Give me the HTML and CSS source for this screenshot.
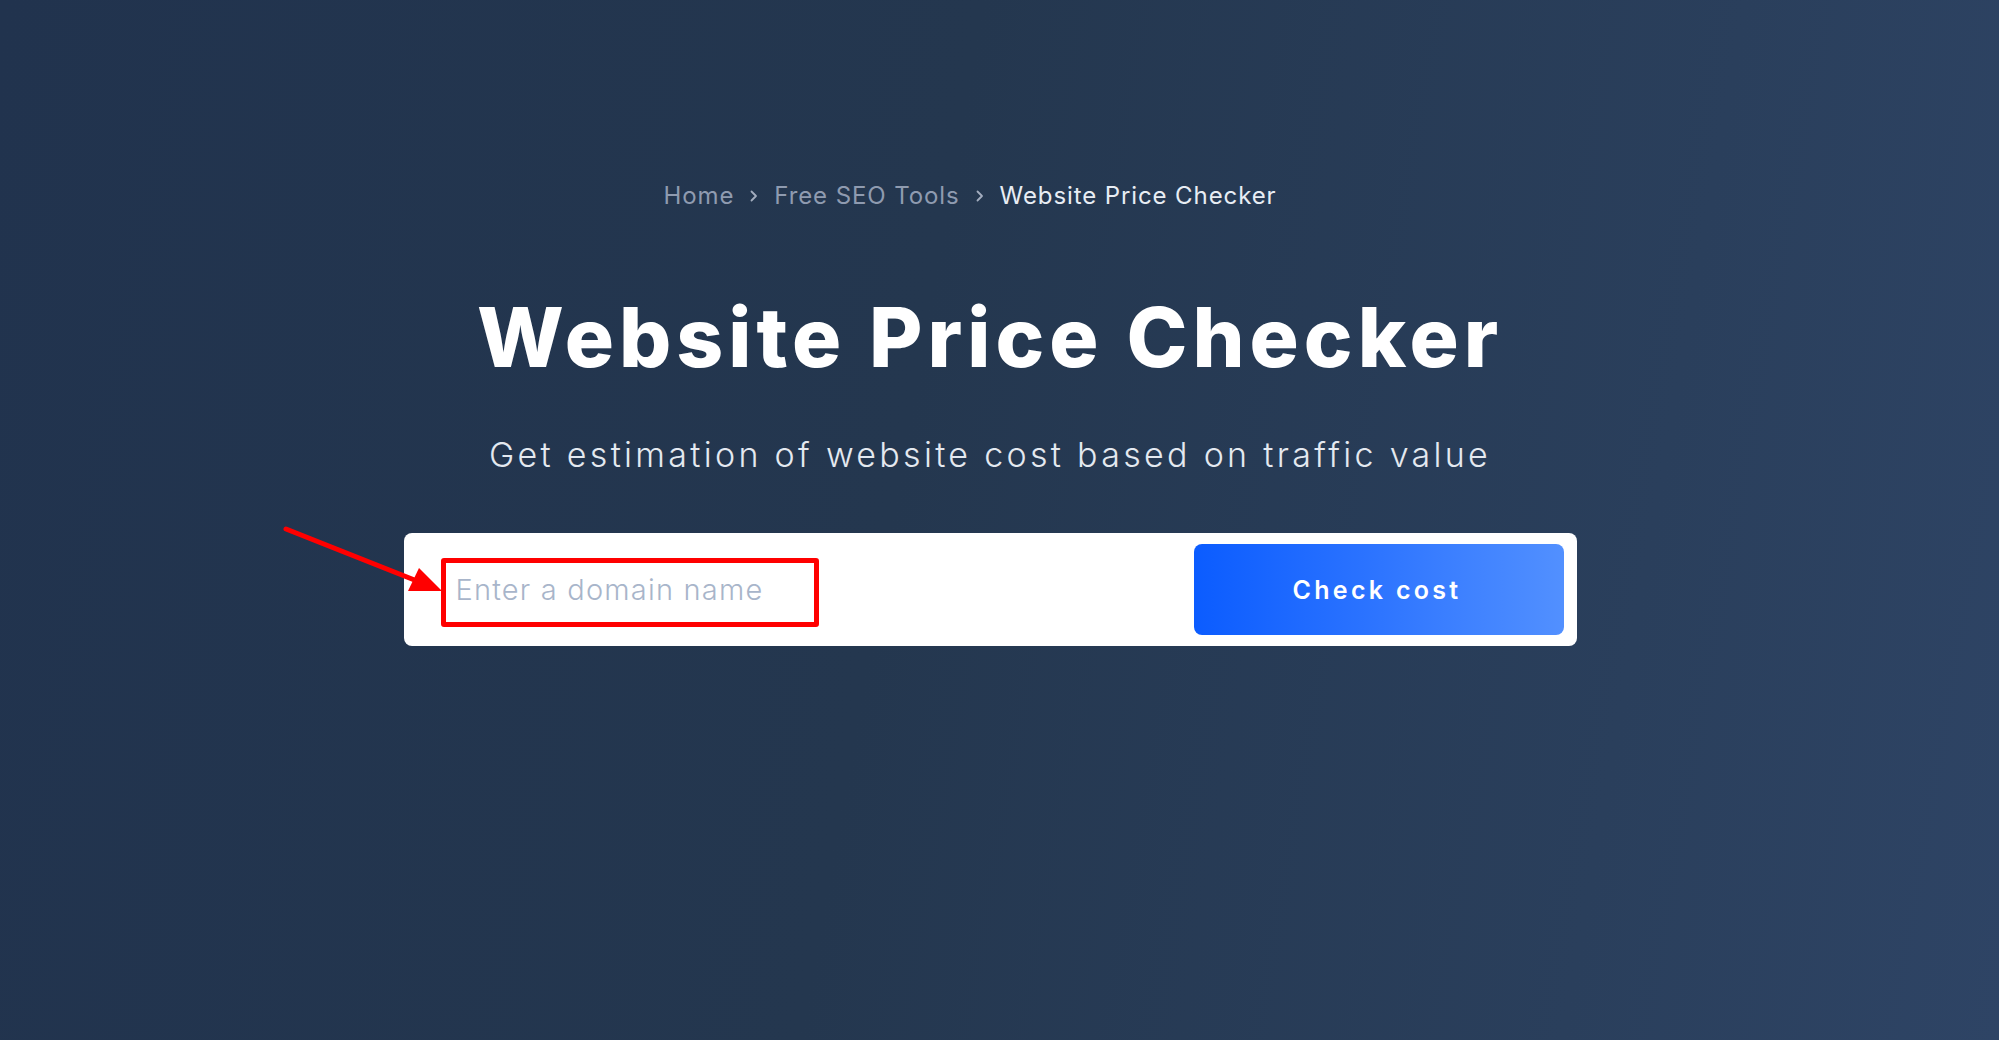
FILE: index.html
```html
<!DOCTYPE html>
<html lang="en">
<head>
<meta charset="utf-8">
<title>Website Price Checker</title>
<link rel="stylesheet" href="styles.css">
</head>
<body>
<main class="hero">
  <nav class="breadcrumb">
    <a class="crumb" href="#">Home</a>
    <svg class="sep" viewBox="0 0 8 12" width="8" height="12"><path d="M1.5 1.5 6 6l-4.5 4.5" fill="none" stroke="currentColor" stroke-width="1.8" stroke-linecap="round" stroke-linejoin="round"/></svg>
    <a class="crumb" href="#">Free SEO Tools</a>
    <svg class="sep" viewBox="0 0 8 12" width="8" height="12"><path d="M1.5 1.5 6 6l-4.5 4.5" fill="none" stroke="currentColor" stroke-width="1.8" stroke-linecap="round" stroke-linejoin="round"/></svg>
    <span class="crumb current">Website Price Checker</span>
  </nav>

  <h1 class="title">Website Price Checker</h1>
  <p class="subtitle">Get estimation of website cost based on traffic value</p>

  <form class="checker" onsubmit="return false">
    <div class="field">
      <input class="domain" type="text" placeholder="Enter a domain name">
    </div>
    <button class="submit" type="submit">Check cost</button>

    <span class="mark"></span>
    <svg class="pointer" viewBox="0 0 180 90" width="180" height="90">
      <line x1="12" y1="11" x2="143" y2="63" stroke="#ff0000" stroke-width="5" stroke-linecap="round"/>
      <polygon points="168,73 134,73 145,50" fill="#ff0000"/>
    </svg>
  </form>
</main>
</body>
</html>
```

FILE: styles.css
```css
* {
  box-sizing: border-box;
}

html, body {
  margin: 0;
  height: 100%;
}

body {
  background: linear-gradient(100deg, #21334e 0%, #24374f 45%, #2a3f5c 80%, #2e4465 100%);
  font-family: "Inter", "Open Sans", sans-serif;
  color: #fff;
  min-height: 1040px;
}

.hero {
  display: flex;
  flex-direction: column;
  align-items: center;
  padding: 181px 19px 0 0;
}

/* breadcrumb trail */
.breadcrumb {
  display: flex;
  align-items: center;
  gap: 16px;
  font-size: 24px;
  line-height: 30px;
  font-weight: 400;
  padding-right: 40px;
}

.crumb {
  color: #8f9bb0;
  text-decoration: none;
  letter-spacing: 0.9px;
}

.crumb.current {
  color: #e8edf4;
}

.sep {
  color: #a3adbf;
  flex: none;
}

.title {
  margin: 78px 0 0;
  font-size: 82px;
  line-height: 98px;
  font-weight: 800;
  letter-spacing: 5px;
  color: #ffffff;
}

.subtitle {
  margin: 48px 0 0;
  font-size: 34px;
  line-height: 40px;
  font-weight: 300;
  color: #e4e9f0;
  letter-spacing: 3.3px;
}

/* domain form */
.checker {
  position: relative;
  margin-top: 58px;
  width: 1173px;
  height: 113px;
  display: flex;
  align-items: stretch;
  gap: 20px;
  padding: 11px 13px 11px 42px;
  background: #ffffff;
  border-radius: 8px;
}

.field {
  flex: 1;
  display: flex;
  align-items: center;
}

.domain {
  width: 100%;
  border: 0;
  outline: none;
  padding: 0 0 0 10px;
  font-family: inherit;
  font-size: 29px;
  font-weight: 300;
  letter-spacing: 1.2px;
  color: #33415c;
  background: transparent;
}

.domain::placeholder {
  color: #a8b5ca;
}

.submit {
  flex: none;
  width: 370px;
  border: 0;
  border-radius: 8px;
  background: linear-gradient(90deg, #0b5cff 0%, #2a72ff 45%, #5290ff 100%);
  color: #ffffff;
  font-family: inherit;
  font-size: 25px;
  font-weight: 600;
  letter-spacing: 3.3px;
  padding-left: 3px;
  cursor: pointer;
}

/* annotation over the domain field */
.mark {
  position: absolute;
  left: 37px;
  top: 25px;
  width: 378px;
  height: 69px;
  border: 5px solid #ff0000;
  border-radius: 3px;
  pointer-events: none;
}

.pointer {
  position: absolute;
  left: -130px;
  top: -15px;
  overflow: visible;
  pointer-events: none;
}
```
